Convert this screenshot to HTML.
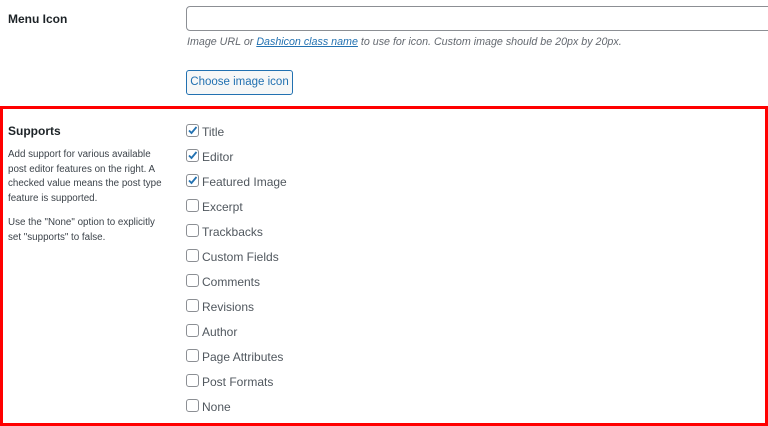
<!DOCTYPE html>
<html><head><style>
body{margin:0;width:768px;height:426px;background:#fff;font-family:"Liberation Sans",sans-serif;color:#1d2327;position:relative;overflow:hidden}
.a{position:absolute}
.lbl{font-weight:bold;font-size:12px;color:#1d2327}
.cb{position:absolute;left:186px;width:11px;height:11px;border:1px solid #8c8f94;border-radius:3px;background:#fff}
.ct{position:absolute;left:202px;font-size:12px;color:#50575e}
.d{position:absolute;left:8px;width:160px;font-size:9.8px;line-height:14.5px;color:#3c434a}
</style></head><body>
<div class="a lbl" style="left:8px;top:12px">Menu Icon</div>
<div class="a" style="left:186px;top:6px;width:600px;height:23px;border:1px solid #8c8f94;border-radius:4px"></div>
<div class="a" style="left:187px;top:36px;font-size:10.7px;font-style:italic;color:#646970">Image URL or <span style="color:#2271b1;text-decoration:underline">Dashicon class name</span> to use for icon. Custom image should be 20px by 20px.</div>
<div class="a" style="left:186px;top:70px;width:105px;height:23px;border:1px solid #2271b1;border-radius:3px;background:#f6f7f7;color:#2271b1;font-size:11.5px;line-height:23px;text-align:center">Choose image icon</div>
<div class="a" style="left:0;top:106px;width:762px;height:314px;border:3px solid #f00"></div>
<div class="a lbl" style="left:8px;top:124px">Supports</div>
<div class="d" style="top:148px">Add support for various available post editor features on the right. A checked value means the post type feature is supported.</div>
<div class="d" style="top:216px">Use the "None" option to explicitly set "supports" to false.</div>
<div class="cb" style="top:124px"><svg width="11" height="11" viewBox="0 0 11 11" style="position:absolute;left:0;top:0"><path d="M2 5.5L4.5 8L9.5 2" stroke="#2271b1" stroke-width="1.8" fill="none"/></svg></div><div class="ct" style="top:125px">Title</div>
<div class="cb" style="top:149px"><svg width="11" height="11" viewBox="0 0 11 11" style="position:absolute;left:0;top:0"><path d="M2 5.5L4.5 8L9.5 2" stroke="#2271b1" stroke-width="1.8" fill="none"/></svg></div><div class="ct" style="top:150px">Editor</div>
<div class="cb" style="top:174px"><svg width="11" height="11" viewBox="0 0 11 11" style="position:absolute;left:0;top:0"><path d="M2 5.5L4.5 8L9.5 2" stroke="#2271b1" stroke-width="1.8" fill="none"/></svg></div><div class="ct" style="top:175px">Featured Image</div>
<div class="cb" style="top:199px"></div><div class="ct" style="top:200px">Excerpt</div>
<div class="cb" style="top:224px"></div><div class="ct" style="top:225px">Trackbacks</div>
<div class="cb" style="top:249px"></div><div class="ct" style="top:250px">Custom Fields</div>
<div class="cb" style="top:274px"></div><div class="ct" style="top:275px">Comments</div>
<div class="cb" style="top:299px"></div><div class="ct" style="top:300px">Revisions</div>
<div class="cb" style="top:324px"></div><div class="ct" style="top:325px">Author</div>
<div class="cb" style="top:349px"></div><div class="ct" style="top:350px">Page Attributes</div>
<div class="cb" style="top:374px"></div><div class="ct" style="top:375px">Post Formats</div>
<div class="cb" style="top:399px"></div><div class="ct" style="top:400px">None</div>
</body></html>
